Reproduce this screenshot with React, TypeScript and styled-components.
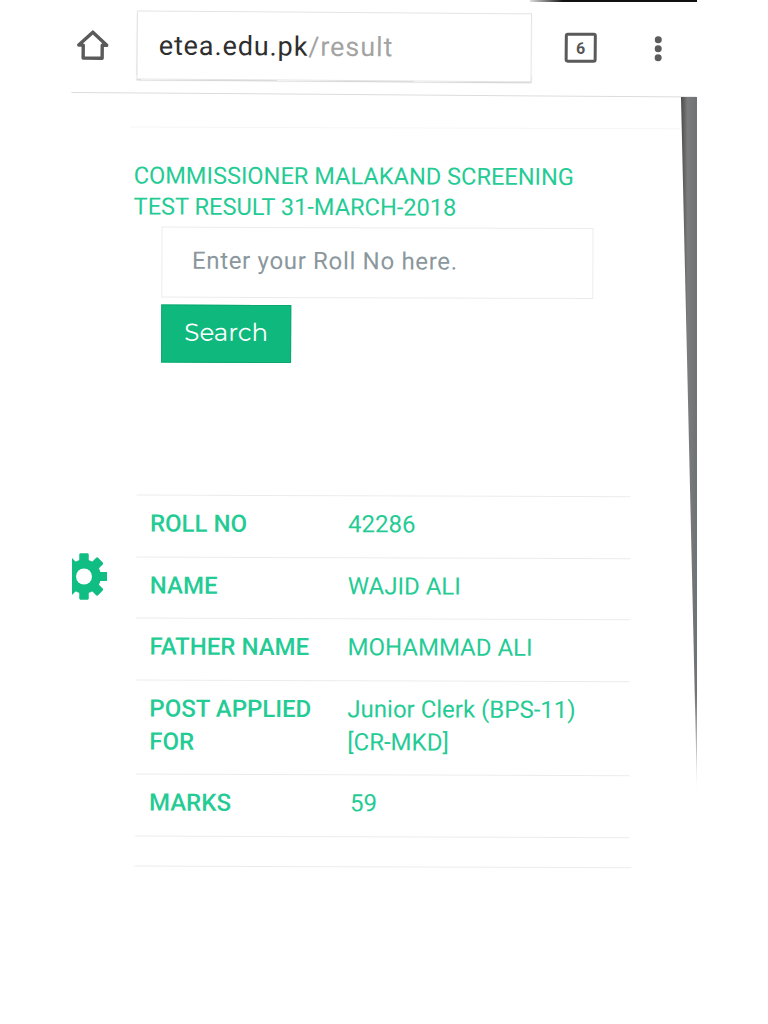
import React from 'react'
import styled, { createGlobalStyle } from 'styled-components'

const GREEN = '#24cb94'

const Global = createGlobalStyle`
  html, body { margin: 0; padding: 0; background: #fff; }
  body { font-family: Roboto, "Liberation Sans", sans-serif; }
`

const Page = styled.div`
  position: relative;
  width: 768px;
  height: 1024px;
  overflow: hidden;
  background: #fff;
`

const TopEdge = styled.div`
  position: absolute;
  top: 0;
  left: 530px;
  width: 167px;
  height: 2px;
  background: linear-gradient(90deg, #ddd, #111 20%, #111);
`

const Wedge = styled.svg`
  position: absolute;
  top: 97px;
  left: 678px;
`

const Toolbar = styled.div`
  box-sizing: border-box;
  display: flex;
  align-items: center;
  width: 625px;
  height: 83px;
  margin: 10px 0 0 72px;
  border-bottom: 1px solid #dcdcdc;
  transform: rotate(0.42deg);
  transform-origin: left top;
`

const HomeIcon = styled.svg`
  flex: none;
  margin: 0 28px 12px 5px;
`

const UrlBox = styled.div`
  box-sizing: border-box;
  width: 395px;
  height: 69px;
  margin-bottom: 14px;
  padding: 2px 21px 0;
  display: flex;
  align-items: center;
  font-size: 27px;
  letter-spacing: 0.9px;
  color: #2e2e2e;
  border: 1px solid #e4e4e4;
  box-shadow: 0 1px 1px #d4d4d4;
  span { color: #a3a3a3; }
`

const TabCount = styled.div`
  box-sizing: border-box;
  flex: none;
  width: 32px;
  height: 30px;
  margin: 0 0 14px 33px;
  display: flex;
  align-items: center;
  justify-content: center;
  border: 3px solid #5a5a5a;
  border-radius: 3px;
  font-size: 16px;
  font-weight: 700;
  color: #555;
`

const Dots = styled.div`
  flex: none;
  display: flex;
  flex-direction: column;
  gap: 2px;
  margin: 0 0 14px 58px;
  i {
    display: block;
    width: 7px;
    height: 7px;
    border-radius: 50%;
    background: #5c5c5c;
  }
`

const Content = styled.main`
  transform: rotate(0.2deg);
  transform-origin: left top;
  padding: 33px 0 0 0;
`

const FaintRule = styled.div`
  width: 550px;
  height: 1px;
  margin-left: 130px;
  background: #f6f6f6;
`

const Column = styled.div`
  padding: 33px 0 0 134px;
`

const Title = styled.h1`
  margin: 0;
  width: 460px;
  font-size: 23.6px;
  font-weight: 400;
  line-height: 31px;
  color: ${GREEN};
`

const SearchForm = styled.form`
  margin: 4px 0 0 28px;
`

const RollInput = styled.input`
  box-sizing: border-box;
  display: block;
  width: 432px;
  height: 71px;
  padding: 0 30px 4px 29.5px;
  font: 400 24px Roboto, sans-serif;
  letter-spacing: 0.68px;
  border: 1px solid #ececec;
  outline: none;
  &::placeholder { color: #8a979c; opacity: 1; }
`

const SearchButton = styled.button`
  box-sizing: border-box;
  display: block;
  width: 130px;
  height: 58px;
  margin-top: 7px;
  padding: 0 0 4px;
  font: 400 24.5px Montserrat, Lato, "Open Sans", sans-serif;
  color: #fff;
  background: #0fb97e;
  border: 1px solid #0ca871;
`

const ResultTable = styled.table`
  width: 494px;
  margin: 132px 0 0 4px;
  border-collapse: collapse;
  color: ${GREEN};
  font-size: 24px;
  line-height: 33px;
`

const Row = styled.tr`
  border-top: 1px solid #ececec;
  &:last-child { border-bottom: 1px solid #ececec; }
`

const Label = styled.th`
  width: 198px;
  padding: 12px 0 15.5px 13.5px;
  text-align: left;
  font-weight: 500;
  vertical-align: top;
`

const Value = styled.td<{ $nudge?: number }>`
  padding: 12px 0 15.5px ${p => p.$nudge ?? 0}px;
  font-weight: 400;
  vertical-align: top;
`

const Spacer = styled.div`
  width: 497px;
  height: 29px;
  margin-left: 3px;
  border-bottom: 1px solid #ececec;
`

const Gear = styled.svg`
  position: absolute;
  left: 72px;
  top: 553px;
`

const rows: { label: string; value: React.ReactNode; nudge?: number }[] = [
  { label: 'ROLL NO', value: '42286' },
  { label: 'NAME', value: 'WAJID ALI' },
  { label: 'FATHER NAME', value: 'MOHAMMAD ALI' },
  { label: 'POST APPLIED FOR', value: <>Junior Clerk (BPS-11)<br />[CR-MKD]</> },
  { label: 'MARKS', value: '59', nudge: 3 },
]

// teeth are drawn full circle, then the left part is cut off by the viewBox
const teeth = [0, 45, 90, 135, 180, 225, 270, 315]

export default function App() {
  return (
    <Page>
      <Global />
      <TopEdge />
      <Toolbar>
        <HomeIcon width="32" height="32" viewBox="0 0 32 32" fill="none" stroke="#5a5a5a" strokeWidth="3.4" strokeLinejoin="round">
          <path d="M2 16 16 3l14 13h-4.5v13h-19V16z" />
        </HomeIcon>
        <UrlBox>etea.edu.pk<span>/result</span></UrlBox>
        <TabCount>6</TabCount>
        <Dots><i /><i /><i /></Dots>
      </Toolbar>
      <Content>
        <FaintRule />
        <Column>
          <Title>COMMISSIONER MALAKAND SCREENING TEST RESULT 31-MARCH-2018</Title>
          <SearchForm onSubmit={e => e.preventDefault()}>
            <RollInput placeholder="Enter your Roll No here." />
            <SearchButton>Search</SearchButton>
          </SearchForm>
          <ResultTable>
            <tbody>
              {rows.map(row => (
                <Row key={row.label}>
                  <Label>{row.label}</Label>
                  <Value $nudge={row.nudge}>{row.value}</Value>
                </Row>
              ))}
            </tbody>
          </ResultTable>
          <Spacer />
        </Column>
      </Content>
      <Wedge width="20" height="700" viewBox="0 0 20 700">
        <defs>
          <linearGradient id="wedgeFill" x1="0" x2="1" y1="0" y2="0">
            <stop offset="0" stopColor="#4a4a4a" />
            <stop offset="0.4" stopColor="#7c7c7c" />
            <stop offset="1" stopColor="#6e7274" />
          </linearGradient>
          <linearGradient id="wedgeFade" x1="0" x2="0" y1="0" y2="1">
            <stop offset="0" stopColor="#fff" />
            <stop offset="0.85" stopColor="#fff" />
            <stop offset="1" stopColor="#000" />
          </linearGradient>
          <mask id="wedgeMask"><rect width="20" height="700" fill="url(#wedgeFade)" /></mask>
        </defs>
        <polygon points="3,0 19,0 19,695" fill="url(#wedgeFill)" mask="url(#wedgeMask)" />
      </Wedge>
      <Gear width="36" height="47" viewBox="12 0 36 47" fill="#10bd82">
        {teeth.map(a => (
          <rect key={a} x="19.5" y="0.5" width="9" height="46" rx="1" transform={`rotate(${a} 24 23.5)`} />
        ))}
        <circle cx="24" cy="23.5" r="17" />
        <circle cx="24" cy="23.5" r="8" fill="#fff" />
      </Gear>
    </Page>
  )
}
